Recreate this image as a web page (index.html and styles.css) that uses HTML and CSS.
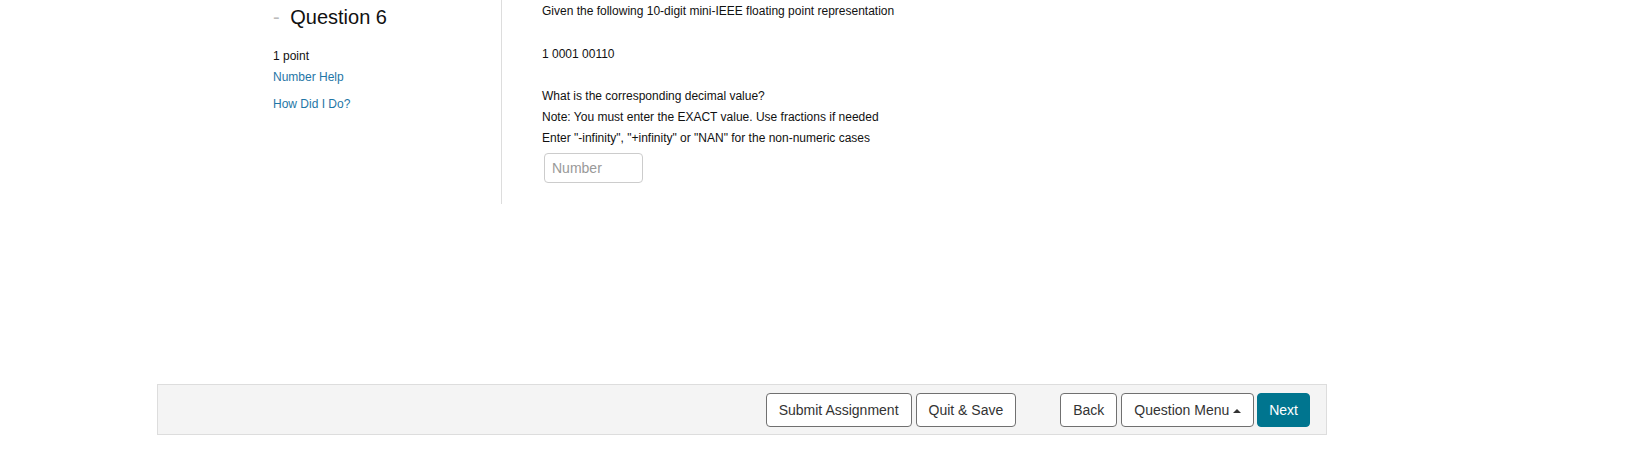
FILE: index.html
```html
<!DOCTYPE html>
<html lang="en">
<head>
  <meta charset="UTF-8">
  <meta name="viewport" content="width=device-width, initial-scale=1.0">
  <title>Question 6</title>
  <link rel="stylesheet" href="styles.css">
</head>
<body>

  <div class="page">
    <div class="question">
      <div class="question-info">
        <h2 class="question-title"><span class="dash">-</span> Question 6</h2>
        <div class="points">1 point</div>
        <a class="help-link" href="#">Number Help</a>
        <a class="help-link how" href="#">How Did I Do?</a>
      </div>

      <div class="question-body">
        <p>Given the following 10-digit mini-IEEE floating point representation</p>
        <p class="blank">&nbsp;</p>
        <p>1 0001 00110</p>
        <p>&nbsp;</p>
        <p>What is the corresponding decimal value?</p>
        <p>Note: You must enter the EXACT value. Use fractions if needed</p>
        <p>Enter "-infinity", "+infinity" or "NAN" for the non-numeric cases</p>
        <input class="answer" type="text" placeholder="Number">
      </div>
    </div>

    <div class="footer-bar">
      <button class="btn">Submit Assignment</button>
      <button class="btn">Quit &amp; Save</button>
      <button class="btn push">Back</button>
      <button class="btn">Question Menu <span class="caret"></span></button>
      <button class="btn primary">Next</button>
    </div>
  </div>

</body>
</html>
```

FILE: styles.css
```css
body {
  margin: 0;
  padding: 0;
  font-family: 'Liberation Sans', Arial, sans-serif;
  background-color: #FFF;
  color: #222;
}

.page {
  width: 1170px;
  margin-left: 157px;
}

.question {
  display: flex;
  height: 204px;
}

.question-info {
  width: 228px;
  padding-left: 116px;
}

.question-title {
  margin: 5px 0 17px;
  font-size: 20px;
  line-height: 24px;
  font-weight: normal;
  color: #111;
}

.question-title .dash {
  color: #bbb;
  margin-right: 5px;
}

.points {
  font-size: 12px;
  line-height: 20px;
  color: #111;
}

.help-link {
  display: block;
  font-size: 12px;
  line-height: 20px;
  color: #1f76a6;
  text-decoration: none;
  margin-top: 1px;
}

.help-link.how {
  margin-top: 7px;
}

.question-body {
  flex-grow: 1;
  border-left: 1px solid #DDD;
  padding: 1px 0 0 40px;
}

.question-body p {
  margin: 0;
  font-size: 12px;
  line-height: 21px;
  color: #111;
}

.question-body p.blank {
  line-height: 22px;
}

.answer {
  display: block;
  box-sizing: border-box;
  width: 99px;
  height: 30px;
  margin: 4px 0 0 2px;
  padding: 4px 7px;
  border: 1px solid #CCC;
  border-radius: 4px;
  font-family: inherit;
  font-size: 14px;
  color: #333;
  outline: none;
}

.answer::placeholder {
  color: #999;
}

.footer-bar {
  display: flex;
  justify-content: flex-end;
  align-items: center;
  margin-top: 180px;
  padding: 8px 16px 7px 15px;
  background-color: #F4F4F4;
  border: 1px solid #DDD;
}

.btn {
  height: 34px;
  padding: 0 12px;
  margin-left: 4px;
  background-color: #FFF;
  border: 1px solid #707070;
  border-radius: 4px;
  font-family: inherit;
  font-size: 14px;
  color: #333;
  cursor: pointer;
}

.btn.push {
  margin-left: 44px;
}

.btn.primary {
  margin-left: 3px;
  padding: 0 11px;
  background-color: #00758F;
  border-color: #00758F;
  color: #FFF;
}

.caret {
  display: inline-block;
  width: 0;
  height: 0;
  margin-left: 0;
  vertical-align: 2px;
  border-left: 4px solid transparent;
  border-right: 4px solid transparent;
  border-bottom: 4px solid #333;
}
```
